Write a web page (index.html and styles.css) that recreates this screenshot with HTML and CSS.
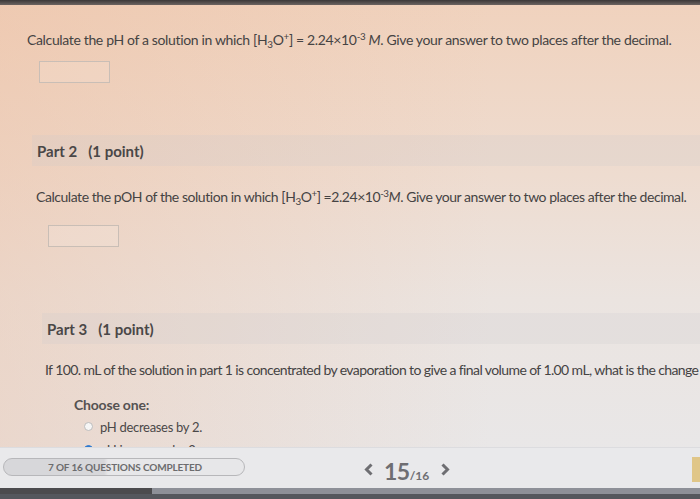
FILE: index.html
```html
<!DOCTYPE html>
<html>
<head>
  <meta charset="UTF-8">
  <title>Homework 15 of 16</title>
  <link rel="stylesheet" href="styles.css">
</head>
<body>
  <div class="topbar"></div>

  <main class="page">
    <!-- Part 1 (header scrolled out of view) -->
    <section class="part part-1">
      <p class="question">Calculate the pH of a solution in which [H<sub>3</sub>O<sup>+</sup>] = 2.24×10<sup>-3</sup> <i>M</i>. Give your answer to two places after the decimal.</p>
      <input class="answer" type="text">
    </section>

    <section class="part part-2">
      <h2 class="part-head"><span>Part 2</span><span>(1 point)</span></h2>
      <p class="question">Calculate the pOH of the solution in which [H<sub>3</sub>O<sup>+</sup>] =2.24×10<sup>-3</sup><i>M</i>. Give your answer to two places after the decimal.</p>
      <input class="answer" type="text">
    </section>

    <section class="part part-3">
      <h2 class="part-head"><span>Part 3</span><span>(1 point)</span></h2>
      <p class="question">If 100. mL of the solution in part 1 is concentrated by evaporation to give a final volume of 1.00 mL, what is the change in pH?</p>
      <div class="choices">
        <div class="choose-label">Choose one:</div>
        <label class="option"><span class="radio"></span>pH decreases by 2.</label>
        <label class="option"><span class="radio checked"></span>pH increases by 2.</label>
      </div>
    </section>
  </main>

  <footer class="status">
    <div class="status-row">
      <div class="progress">
        <span class="progress-text">7 of 16 questions completed</span>
      </div>
      <div class="pager">
        <svg class="chev" width="10" height="13" viewBox="0 0 10 13"><polyline points="7.5,1.5 2.5,6.5 7.5,11.5" fill="none" stroke="currentColor" stroke-width="3"/></svg>
        <span class="count"><span class="current">15</span><span class="total">/16</span></span>
        <svg class="chev" width="10" height="13" viewBox="0 0 10 13"><polyline points="2.5,1.5 7.5,6.5 2.5,11.5" fill="none" stroke="currentColor" stroke-width="3"/></svg>
      </div>
      <div class="submit-edge"></div>
    </div>
    <div class="bottombar"></div>
  </footer>
</body>
</html>
```

FILE: styles.css
```css
html {
  height: 100%;
  background:
    linear-gradient(to right, rgba(236, 186, 155, 0.35), rgba(236, 190, 160, 0) 70%),
    linear-gradient(to bottom, #f0d2bd 0%, #eedcd0 35%, #ebe4e0 60%, #e8e8ea 100%);
}

body {
  margin: 0;
  height: 100%;
  display: flex;
  flex-direction: column;
  font-family: Lato, "Open Sans", sans-serif;
  color: #454343;
  overflow: hidden;
}

.topbar {
  height: 5px;
  flex: none;
  background: linear-gradient(to bottom, #3b3838, #6c6461);
}

/* scrolling question area, clipped by the footer */
.page {
  flex: 1;
  min-height: 0;
  overflow: hidden;
  white-space: nowrap;
}

.question {
  margin: 0;
  font-size: 14px;
  line-height: 18px;
  letter-spacing: -0.35px;
}

sub, sup {
  font-size: 0.7em;
  line-height: 0;
  position: relative;
  vertical-align: baseline;
}

sub {
  top: 0.3em;
}

sup {
  top: -0.5em;
}

.answer {
  display: block;
  box-sizing: border-box;
  width: 71px;
  height: 22px;
  border: 1px solid #c9beb6;
  background: rgba(255, 255, 255, 0.12);
}

.part-head {
  display: flex;
  align-items: center;
  gap: 11px;
  height: 31px;
  margin: 0;
  padding-left: 5px;
  font-size: 15px;
  font-weight: 700;
  color: #4a4747;
  background: rgba(200, 200, 205, 0.2);
}

/* each part sits a little further right */
.part-1 {
  padding: 26px 0 0 27px;
}

.part-1 .answer {
  margin: 12px 0 0 12px;
}

.part-2 {
  margin-top: 52px;
  padding-left: 32px;
}

.part-2 .question {
  margin: 22px 0 0 4px;
  letter-spacing: -0.45px;
}

.part-2 .answer {
  margin: 19px 0 0 16px;
}

.part-3 {
  margin-top: 66px;
  padding-left: 42px;
}

.part-3 .question {
  margin: 17px 0 0 3px;
  letter-spacing: -0.6px;
}

.choices {
  margin: 17px 0 0 32px;
}

.choose-label {
  font-size: 14px;
  line-height: 18px;
  font-weight: 700;
  color: #555252;
  letter-spacing: -0.2px;
}

.option {
  display: flex;
  align-items: center;
  gap: 7px;
  height: 23px;
  margin-left: 10px;
  font-size: 13px;
  letter-spacing: -0.3px;
  color: #4a4848;
}

.option:first-of-type {
  margin-top: 1px;
}

.radio {
  box-sizing: border-box;
  width: 9px;
  height: 9px;
  border: 1px solid #bdbdbd;
  border-radius: 50%;
  background: #f6f6f6;
}

.radio.checked {
  border-color: #2f7ad0;
  background: #2f7ad0;
}

/* progress footer */
.status {
  flex: none;
  background: #e9e9eb;
  border-top: 1px solid #dcdcdf;
}

.status-row {
  display: flex;
  align-items: center;
  height: 40px;
}

.progress {
  box-sizing: border-box;
  width: 242px;
  height: 18px;
  margin: 0 0 2px 3px;
  padding-left: 44px;
  border: 1px solid #b7b7ba;
  border-radius: 9px;
  background: linear-gradient(to right, #d7d7da 0, #d7d7da 100px, #e7e7e9 104px);
  display: flex;
  align-items: center;
}

.progress-text {
  font-size: 10px;
  font-weight: 700;
  text-transform: uppercase;
  color: #6c6c6e;
  letter-spacing: -0.15px;
}

.pager {
  display: flex;
  align-items: center;
  margin: 6px 0 0 119px;
  color: #6e6e72;
  font-weight: 700;
}

.chev {
  display: block;
  margin-top: -3px;
}

.count {
  margin: 0 11px 0 10px;
}

.current {
  font-size: 23px;
  letter-spacing: -0.5px;
}

.total {
  font-size: 12px;
}

.submit-edge {
  width: 8px;
  height: 25px;
  margin: 2px 0 0 auto;
  background: #e0c688;
}

.bottombar {
  height: 11px;
  background:
    linear-gradient(to right, #4c4b4e 0, #4c4b4e 152px, #8e9098 152px) top / 100% 6px no-repeat,
    #55575d;
}
```
